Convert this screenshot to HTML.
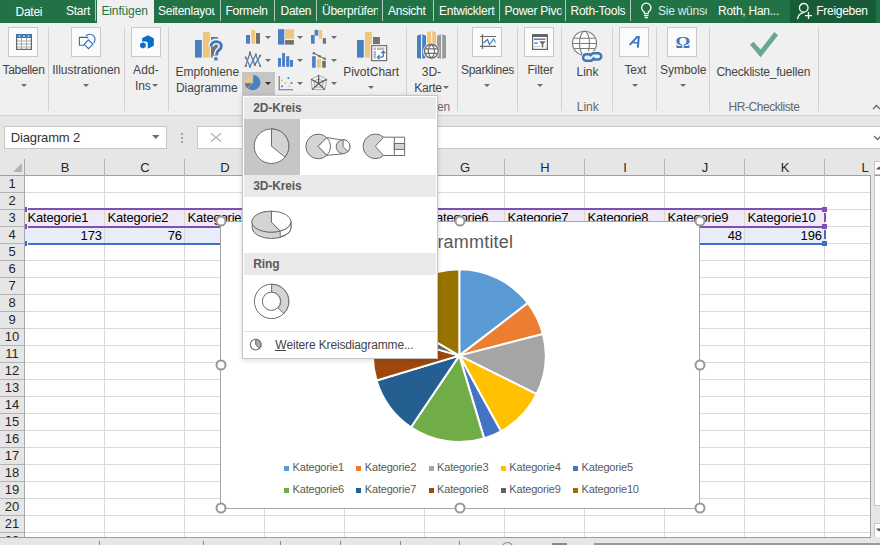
<!DOCTYPE html><html><head><meta charset="utf-8"><style>
*{margin:0;padding:0;box-sizing:border-box}
html,body{width:880px;height:545px;overflow:hidden;background:#e6e6e6;font-family:"Liberation Sans",sans-serif}
.t{position:absolute;white-space:nowrap;line-height:1}
svg{position:absolute;overflow:visible}
</style></head><body>
<div style="position:absolute;left:0px;top:0px;width:880px;height:23px;background:#217346"></div>
<div style="position:absolute;left:97px;top:0px;width:57px;height:23px;background:#f0f0f0"></div>
<div style="position:absolute;left:790px;top:0px;width:86px;height:23px;background:#185c37"></div>
<div style="position:absolute;left:95px;top:0px;width:1px;height:21px;background:#c9dbcf;opacity:0.85"></div>
<div style="position:absolute;left:220px;top:0px;width:1px;height:21px;background:#c9dbcf;opacity:0.85"></div>
<div style="position:absolute;left:274px;top:0px;width:1px;height:21px;background:#c9dbcf;opacity:0.85"></div>
<div style="position:absolute;left:316px;top:0px;width:1px;height:21px;background:#c9dbcf;opacity:0.85"></div>
<div style="position:absolute;left:382px;top:0px;width:1px;height:21px;background:#c9dbcf;opacity:0.85"></div>
<div style="position:absolute;left:433px;top:0px;width:1px;height:21px;background:#c9dbcf;opacity:0.85"></div>
<div style="position:absolute;left:499px;top:0px;width:1px;height:21px;background:#c9dbcf;opacity:0.85"></div>
<div style="position:absolute;left:565px;top:0px;width:1px;height:21px;background:#c9dbcf;opacity:0.85"></div>
<div style="position:absolute;left:630px;top:0px;width:1px;height:21px;background:#c9dbcf;opacity:0.85"></div>
<div class="t" style="left:15.5px;top:5.84px;font-size:12px;color:#ffffff;letter-spacing:-0.25px;">Datei</div>
<div class="t" style="left:66px;top:4.84px;font-size:12px;color:#ffffff;letter-spacing:-0.25px;">Start</div>
<div class="t" style="left:158px;top:4.84px;font-size:12px;color:#ffffff;letter-spacing:-0.25px;width:57px;clip-path:inset(-10px 0px -10px -10px);">Seitenlayout</div>
<div class="t" style="left:225.5px;top:4.84px;font-size:12px;color:#ffffff;letter-spacing:-0.25px;">Formeln</div>
<div class="t" style="left:280.5px;top:4.84px;font-size:12px;color:#ffffff;letter-spacing:-0.25px;">Daten</div>
<div class="t" style="left:322px;top:4.84px;font-size:12px;color:#ffffff;letter-spacing:-0.25px;width:56px;clip-path:inset(-10px 0px -10px -10px);">Überprüfen</div>
<div class="t" style="left:388px;top:4.84px;font-size:12px;color:#ffffff;letter-spacing:-0.25px;">Ansicht</div>
<div class="t" style="left:439px;top:4.84px;font-size:12px;color:#ffffff;letter-spacing:-0.25px;width:56px;clip-path:inset(-10px 0px -10px -10px);">Entwicklertools</div>
<div class="t" style="left:504.5px;top:4.84px;font-size:12px;color:#ffffff;letter-spacing:-0.25px;width:57px;clip-path:inset(-10px 0px -10px -10px);">Power Pivot</div>
<div class="t" style="left:570.5px;top:4.84px;font-size:12px;color:#ffffff;letter-spacing:-0.25px;">Roth-Tools</div>
<div class="t" style="left:101.5px;top:4.84px;font-size:12px;color:#217346;letter-spacing:-0.15px;">Einfügen</div>
<div class="t" style="left:658px;top:4.84px;font-size:12px;color:#dfe9e2;letter-spacing:-0.25px;width:49px;clip-path:inset(-10px 0px -10px -10px);">Sie wünschen</div>
<div class="t" style="left:718px;top:4.84px;font-size:12px;color:#ffffff;letter-spacing:-0.25px;">Roth, Han...</div>
<div class="t" style="left:816.3px;top:4.84px;font-size:12px;color:#ffffff;letter-spacing:-0.3px;">Freigeben</div>
<svg style="left:640px;top:1px" width="13" height="19" viewBox="0 0 13 19"><path d="M4.3 12.6V10.9A4.6 4.6 0 1 1 8.3 10.9V12.6z" fill="none" stroke="#fff" stroke-width="1.25" stroke-linejoin="round"/><path d="M4 14.6h4.6M4.7 16.6h3.2" stroke="#fff" stroke-width="1.25"/></svg>
<svg style="left:796px;top:2px" width="18" height="18" viewBox="0 0 18 18"><circle cx="7.75" cy="5.8" r="4.3" fill="none" stroke="#fff" stroke-width="1.3"/><path d="M1.6 16.6C2.4 13.2 4.6 11.1 7.6 10.7" fill="none" stroke="#fff" stroke-width="1.3" stroke-linecap="round"/><path d="M9 13.6h7M12.5 10.1v7" stroke="#fff" stroke-width="1.3"/></svg>
<div style="position:absolute;left:0px;top:23px;width:880px;height:92px;background:#f0f0f0"></div>
<div style="position:absolute;left:0px;top:115px;width:880px;height:1px;background:#d4d4d4"></div>
<div style="position:absolute;left:48px;top:27px;width:1px;height:84px;background:#d2d2d2"></div>
<div style="position:absolute;left:124px;top:27px;width:1px;height:84px;background:#d2d2d2"></div>
<div style="position:absolute;left:168px;top:27px;width:1px;height:84px;background:#d2d2d2"></div>
<div style="position:absolute;left:406px;top:27px;width:1px;height:84px;background:#d2d2d2"></div>
<div style="position:absolute;left:457px;top:27px;width:1px;height:84px;background:#d2d2d2"></div>
<div style="position:absolute;left:517px;top:27px;width:1px;height:84px;background:#d2d2d2"></div>
<div style="position:absolute;left:561px;top:27px;width:1px;height:84px;background:#d2d2d2"></div>
<div style="position:absolute;left:612px;top:27px;width:1px;height:84px;background:#d2d2d2"></div>
<div style="position:absolute;left:656px;top:27px;width:1px;height:84px;background:#d2d2d2"></div>
<div style="position:absolute;left:709px;top:27px;width:1px;height:84px;background:#d2d2d2"></div>
<div style="position:absolute;left:818px;top:27px;width:1px;height:84px;background:#d2d2d2"></div>
<div style="position:absolute;left:8px;top:27px;width:30px;height:30px;background:#fbfbfb;border:1px solid #c8c8c8"></div>
<svg style="left:16px;top:34px" width="16" height="16" viewBox="0 0 16 16"><rect x="0" y="0" width="16" height="16" fill="#fff"/><path d="M5.5 4v11M10.5 4v11M1 7h14M1 10h14M1 13h14" stroke="#a8a8a8" stroke-width="1"/><rect x="0.6" y="0.6" width="14.8" height="14.8" fill="none" stroke="#666" stroke-width="1.2"/><rect x="0" y="0" width="16" height="4" fill="#3b73b5"/><path d="M2.5 2h2M7 2h2M11.5 2h2" stroke="#fff" stroke-width="1"/></svg>
<div class="t" style="left:2.6px;top:63.84px;font-size:12px;color:#444444;letter-spacing:-0.35px;">Tabellen</div>
<svg style="left:20.5px;top:84.0px" width="6" height="3" viewBox="0 0 6 3"><path d="M0 0h6L3 3z" fill="#6d6d6d"/></svg>
<div style="position:absolute;left:71px;top:27px;width:30px;height:30px;background:#fbfbfb;border:1px solid #c8c8c8"></div>
<svg style="left:78px;top:33px" width="18" height="17" viewBox="0 0 18 17"><g fill="none" stroke="#2f6db5" stroke-width="1.1"><path d="M6.1 12.3H1.4V4.4H9.6V5.6"/><path d="M10.5 6.9L14.9 11.3 10.5 15.7 6.1 11.3z"/><path d="M7.85 2.85A5.3 5.3 0 1 1 15.54 10.15"/></g></svg>
<div class="t" style="left:52.2px;top:63.84px;font-size:12px;color:#444444;letter-spacing:0px;">Illustrationen</div>
<svg style="left:83px;top:84.1px" width="6" height="3" viewBox="0 0 6 3"><path d="M0 0h6L3 3z" fill="#6d6d6d"/></svg>
<div style="position:absolute;left:131px;top:27px;width:30px;height:30px;background:#fbfbfb;border:1px solid #c8c8c8"></div>
<svg style="left:139px;top:34px" width="16" height="16" viewBox="0 0 16 16"><path d="M8.8 1.2l6 3v7.6l-6 3V8.4l-1.5-.9H3.1V4.2z" fill="#0a6dc9"/><path d="M3.9 8.3l2.8 1.5v3.2L3.9 14.5 1.1 13V9.8z" fill="#0a6dc9"/></svg>
<div class="t" style="left:133px;top:64.14px;font-size:12px;color:#444444;letter-spacing:0.15px;">Add-</div>
<div class="t" style="left:135px;top:79.84px;font-size:12px;color:#444444;letter-spacing:-0.1px;">Ins</div>
<svg style="left:151.8px;top:84.0px" width="6" height="3" viewBox="0 0 6 3"><path d="M0 0h6L3 3z" fill="#6d6d6d"/></svg>
<svg style="left:195px;top:32px" width="24" height="26" viewBox="0 0 24 26"><rect x="0" y="8" width="6.8" height="17.6" fill="#4a7fc1"/><rect x="8" y="0" width="6.8" height="25.6" fill="#efc67c"/><rect x="16" y="5" width="6.9" height="20.6" fill="#737373"/></svg>
<svg style="left:207px;top:39px" width="18" height="23" viewBox="0 0 18 23"><path d="M4 7.6c0-3 2.2-5 5.2-5 3 0 5.2 1.8 5.2 4.5 0 2.2-1.2 3.2-2.7 4.3-1.3 1-1.8 1.6-1.8 3v1.3" fill="none" stroke="#f0f0f0" stroke-width="6"/><rect x="5.6" y="16.5" width="6" height="6" fill="#f0f0f0"/><path d="M4 7.6c0-3 2.2-5 5.2-5 3 0 5.2 1.8 5.2 4.5 0 2.2-1.2 3.2-2.7 4.3-1.3 1-1.8 1.6-1.8 3v1.3" fill="none" stroke="#3e78bb" stroke-width="2.9"/><rect x="7.3" y="18.3" width="3.2" height="3.2" fill="#3e78bb"/></svg>
<div class="t" style="left:175.5px;top:65.84px;font-size:12px;color:#444444;letter-spacing:-0.05px;">Empfohlene</div>
<div class="t" style="left:176px;top:81.54px;font-size:12px;color:#444444;letter-spacing:-0.05px;">Diagramme</div>
<div style="position:absolute;left:242px;top:72px;width:33px;height:24px;background:#c5c5c5"></div>
<svg style="left:245px;top:29px" width="16" height="16" viewBox="0 0 16 16"><rect x="1" y="6" width="4" height="8.7" fill="#4a7fc1"/><rect x="6.3" y="1" width="3.9" height="13.7" fill="#efc67c"/><rect x="11" y="4" width="4" height="10.7" fill="#6f6f6f"/></svg>
<svg style="left:277px;top:29px" width="17" height="16" viewBox="0 0 17 16"><rect x="1" y="0.2" width="6.3" height="15.4" fill="#4a7fc1"/><rect x="8.2" y="0.2" width="8.7" height="9.6" fill="#efc67c"/><rect x="8.2" y="11.1" width="8.7" height="4.5" fill="#6f6f6f"/></svg>
<svg style="left:310px;top:29px" width="17" height="16" viewBox="0 0 17 16"><rect x="1" y="6" width="3.7" height="8.7" fill="#4a7fc1"/><rect x="4.6" y="0.9" width="3.6" height="5.7" fill="#4a7fc1"/><rect x="8.9" y="0.9" width="3.3" height="8.9" fill="#efc67c"/><rect x="12.8" y="9.2" width="3.2" height="5.5" fill="#6f6f6f"/></svg>
<svg style="left:243px;top:49px" width="20" height="20" viewBox="0 0 20 20"><path d="M2.75 16.9L7 3.7 11.9 15.8 17.1 6.8" fill="none" stroke="#6f6f6f" stroke-width="1.2"/><path d="M2.75 8.6L7 17.6 12.8 5.7 17.1 16.9" fill="none" stroke="#4a7fc1" stroke-width="1.2"/><g fill="#6f6f6f"><rect x="1.75" y="15.9" width="2" height="2"/><rect x="6" y="2.7" width="2" height="2"/><rect x="10.9" y="14.8" width="2" height="2"/><rect x="16.1" y="5.8" width="2" height="2"/></g><g fill="#4a7fc1"><rect x="1.75" y="7.6" width="2" height="2"/><rect x="6" y="16.6" width="2" height="2"/><rect x="11.8" y="4.7" width="2" height="2"/><rect x="16.1" y="15.9" width="2" height="2"/></g></svg>
<svg style="left:277px;top:52px" width="17" height="16" viewBox="0 0 17 16"><rect x="1" y="6" width="3" height="8.8" fill="#4a7fc1"/><rect x="5.1" y="1" width="2.9" height="13.8" fill="#4a7fc1"/><rect x="9.2" y="4.2" width="3.1" height="10.6" fill="#4a7fc1"/><rect x="13" y="8" width="3" height="6.8" fill="#4a7fc1"/></svg>
<svg style="left:311px;top:52px" width="16" height="16" viewBox="0 0 16 16"><rect x="1.1" y="4.2" width="3.6" height="11.5" fill="#4a7fc1"/><rect x="6" y="7.1" width="3.9" height="8.6" fill="#efc67c"/><rect x="11.2" y="8.9" width="3.6" height="6.8" fill="#6f6f6f"/><path d="M2.8 1l5.8 3.2 5.1 2.5" fill="none" stroke="#6f6f6f" stroke-width="1.1"/><circle cx="2.8" cy="1.2" r="1.3" fill="#6f6f6f"/><circle cx="8.6" cy="4.2" r="1.3" fill="#6f6f6f"/><circle cx="13.7" cy="6.7" r="1.3" fill="#6f6f6f"/></svg>
<svg style="left:245px;top:75px" width="16" height="16" viewBox="0 0 16 16"><path d="M8.2 7.5V0A7.6 7.6 0 1 1 2.8 13.3z" fill="#4a7fc1"/><path d="M7.2 8.3L1.9 13.3A7.6 7.6 0 0 1 0 8.3z" fill="#6f6f6f"/><path d="M7.2 7.3H0A7.6 7.6 0 0 1 7.2 0z" fill="#efc67c"/></svg>
<svg style="left:278px;top:75px" width="16" height="16" viewBox="0 0 16 16"><path d="M1.2 1v13.8H15" fill="none" stroke="#6f6f6f" stroke-width="1.1"/><rect x="9.5" y="2.2" width="1.8" height="1.8" fill="#4a7fc1"/><rect x="3.2" y="4.5" width="1.8" height="1.8" fill="#efc67c"/><rect x="6.4" y="7.2" width="1.8" height="1.8" fill="#efc67c"/><rect x="12.6" y="7.2" width="1.8" height="1.8" fill="#4a7fc1"/><rect x="3.2" y="10.4" width="1.8" height="1.8" fill="#4a7fc1"/><rect x="10.6" y="10.4" width="1.8" height="1.8" fill="#efc67c"/></svg>
<svg style="left:308px;top:72px" width="22" height="22" viewBox="0 0 22 22"><g fill="none" stroke="#8a8a8a" stroke-width="0.7"><path d="M10.6 3.2L18.8 7.3 16.8 17.6H4.2L3.2 7.3z"/><path d="M10.6 7L15.5 9.3 14.2 15H7L5.9 9.3z"/></g><g stroke="#5a5a5a" stroke-width="1.3"><path d="M10.6 11.5V3.2M10.6 11.5L18.8 7.3M10.6 11.5L16.8 17.6M10.6 11.5L4.2 17.6M10.6 11.5L3.2 7.3"/></g></svg>
<svg style="left:264.5px;top:36.0px" width="6" height="3" viewBox="0 0 6 3"><path d="M0 0h6L3 3z" fill="#6d6d6d"/></svg>
<svg style="left:297px;top:36.0px" width="6" height="3" viewBox="0 0 6 3"><path d="M0 0h6L3 3z" fill="#6d6d6d"/></svg>
<svg style="left:330.5px;top:36.0px" width="6" height="3" viewBox="0 0 6 3"><path d="M0 0h6L3 3z" fill="#6d6d6d"/></svg>
<svg style="left:264.5px;top:59.0px" width="6" height="3" viewBox="0 0 6 3"><path d="M0 0h6L3 3z" fill="#6d6d6d"/></svg>
<svg style="left:297px;top:59.0px" width="6" height="3" viewBox="0 0 6 3"><path d="M0 0h6L3 3z" fill="#6d6d6d"/></svg>
<svg style="left:330.5px;top:59.0px" width="6" height="3" viewBox="0 0 6 3"><path d="M0 0h6L3 3z" fill="#6d6d6d"/></svg>
<svg style="left:297px;top:81.8px" width="6" height="3" viewBox="0 0 6 3"><path d="M0 0h6L3 3z" fill="#6d6d6d"/></svg>
<svg style="left:330.5px;top:81.8px" width="6" height="3" viewBox="0 0 6 3"><path d="M0 0h6L3 3z" fill="#6d6d6d"/></svg>
<svg style="left:264.5px;top:81.8px" width="6" height="3" viewBox="0 0 6 3"><path d="M0 0h6L3 3z" fill="#303030"/></svg>
<svg style="left:357px;top:32px" width="24" height="26" viewBox="0 0 24 26"><rect x="0" y="8" width="6.8" height="17.6" fill="#4a7fc1"/><rect x="8" y="0" width="6.8" height="25.6" fill="#efc67c"/><rect x="16" y="5" width="6.9" height="20.6" fill="#737373"/></svg>
<svg style="left:370px;top:44px" width="18" height="18" viewBox="0 0 18 18"><rect x="0" y="0" width="18" height="18" fill="#f0f0f0"/><rect x="1.6" y="1.6" width="15" height="15" fill="#fff" stroke="#777" stroke-width="1.3"/><rect x="3.5" y="3.5" width="2.5" height="2.5" fill="#b8b8b8"/><rect x="7" y="3.5" width="7.5" height="2.5" fill="#b8b8b8"/><rect x="3.5" y="7" width="2.5" height="7.5" fill="#b8b8b8"/><path d="M7.5 13.2h4.3a1.5 1.5 0 0 0 1.5-1.5V7.3" fill="none" stroke="#3e78bb" stroke-width="1.3"/><path d="M9.5 11.2l-2 2 2 2M11.3 9.2l2-2 2 2" fill="none" stroke="#3e78bb" stroke-width="1.3"/></svg>
<div class="t" style="left:343.2px;top:65.94px;font-size:12px;color:#444444;letter-spacing:-0.02px;">PivotChart</div>
<svg style="left:368px;top:85.9px" width="6" height="3" viewBox="0 0 6 3"><path d="M0 0h6L3 3z" fill="#6d6d6d"/></svg>
<svg style="left:417px;top:31px" width="30" height="29" viewBox="0 0 30 29"><path d="M0 4.8l4 -1.6v24.6L0 27z" fill="#4a7fc1"/><path d="M5.2 3.2l3.8 1.6V27l-3.8 0.8z" fill="#4a7fc1"/><path d="M10 1.6l4-1.6v24H10z" fill="#efc67c"/><path d="M15.2 0l3.8 1.6V24h-3.8z" fill="#efc67c"/><path d="M20 4.8l4-1.6v24.6l-4-.8z" fill="#9a9a9a"/><path d="M25.2 3.2l3.8 1.6V27l-3.8 .8z" fill="#9a9a9a"/><circle cx="14.3" cy="20.4" r="8.3" fill="#f0f0f0"/><circle cx="14.4" cy="20.1" r="6.9" fill="#fff" stroke="#6f6f6f" stroke-width="1.4"/><path d="M7.8 17.9h13.2M7.8 22.3h13.2" stroke="#6f6f6f" stroke-width="1.2"/><path d="M14.4 13.2c-4.2 3.5-4.2 10.3 0 13.8M14.4 13.2c4.2 3.5 4.2 10.3 0 13.8" fill="none" stroke="#6f6f6f" stroke-width="1.2"/></svg>
<div class="t" style="left:421.8px;top:65.94px;font-size:12px;color:#444444;letter-spacing:-0.05px;">3D-</div>
<div class="t" style="left:414.3px;top:81.54px;font-size:12px;color:#444444;letter-spacing:-0.25px;">Karte</div>
<svg style="left:443.3px;top:85.7px" width="6" height="3" viewBox="0 0 6 3"><path d="M0 0h6L3 3z" fill="#6d6d6d"/></svg>
<div class="t" style="left:414px;top:100.84px;font-size:12px;color:#666;letter-spacing:-0.1px;">Touren</div>
<div class="t" style="left:261px;top:100.84px;font-size:12px;color:#666;letter-spacing:-0.1px;">Diagramme</div>
<div style="position:absolute;left:472px;top:27px;width:30px;height:30px;background:#fbfbfb;border:1px solid #c8c8c8"></div>
<svg style="left:479px;top:33px" width="18" height="17" viewBox="0 0 18 17"><path d="M3.5 1v15M1 3.5h16M1 13.4h16" stroke="#6a6a6a" stroke-width="1.2"/><path d="M4.5 10l4-3.5 2 5 4-5.5 2 3.5" fill="none" stroke="#3e78bb" stroke-width="1.1"/></svg>
<div class="t" style="left:461px;top:63.84px;font-size:12px;color:#444444;letter-spacing:-0.3px;">Sparklines</div>
<svg style="left:484.2px;top:84.1px" width="6" height="3" viewBox="0 0 6 3"><path d="M0 0h6L3 3z" fill="#6d6d6d"/></svg>
<div style="position:absolute;left:524px;top:27px;width:30px;height:30px;background:#fbfbfb;border:1px solid #c8c8c8"></div>
<svg style="left:532px;top:34px" width="16" height="16" viewBox="0 0 16 16"><rect x="0.6" y="0.6" width="14.8" height="14.8" fill="#fff" stroke="#666" stroke-width="1.2"/><rect x="0" y="0" width="16" height="3" fill="#666"/><rect x="2" y="4.5" width="11.5" height="1.4" fill="#3e78bb"/><rect x="2" y="8.5" width="4" height="1.2" fill="#3e78bb"/><rect x="2" y="12" width="6" height="1.1" fill="#b7cde6"/><path d="M7.2 7.2h6.6l-2.5 2.8v3.5h-1.6V10z" fill="#6a6a6a"/><rect x="13.2" y="12" width="0.8" height="1.5" fill="#9cb8dc"/></svg>
<div class="t" style="left:527.4px;top:63.84px;font-size:12px;color:#444444;letter-spacing:-0.1px;">Filter</div>
<svg style="left:536.6px;top:84.1px" width="6" height="3" viewBox="0 0 6 3"><path d="M0 0h6L3 3z" fill="#6d6d6d"/></svg>
<svg style="left:571px;top:30px" width="34" height="32" viewBox="0 0 34 32"><g fill="#fff" stroke="#7a7a7a" stroke-width="1.1"><circle cx="13.5" cy="13.2" r="12"/></g><g fill="none" stroke="#7a7a7a" stroke-width="1.1"><ellipse cx="13.5" cy="13.2" rx="5" ry="12"/><path d="M1.5 13.5h24M3.2 8.2h20.6M3.2 18.5h20.6"/></g><path d="M11 32V25.5A4.5 4.5 0 0 1 15.5 21H33V32z" fill="#f0f0f0"/><g fill="none" stroke="#3e78bb" stroke-width="2.5"><path d="M19.5 24.3h-4.2a3.2 3.2 0 0 0 0 6.4h5.2l3-3"/><path d="M22.5 29.6h4.5a3.2 3.2 0 0 0 0-6.4h-5.2l-3 3"/></g></svg>
<div class="t" style="left:576.6px;top:65.54px;font-size:12px;color:#444444;letter-spacing:-0.05px;">Link</div>
<div class="t" style="left:576.8px;top:100.84px;font-size:12px;color:#666;letter-spacing:-0.05px;">Link</div>
<div style="position:absolute;left:619px;top:27px;width:30px;height:30px;background:#fbfbfb;border:1px solid #c8c8c8"></div>
<svg style="left:626px;top:33px" width="18" height="18" viewBox="0 0 18 18"><g fill="none" stroke="#3e78bb" stroke-linecap="round" stroke-linejoin="round"><path d="M4.3 11.2L11.1 4.1" stroke-width="2"/><path d="M12.8 3.9L11.9 13.9" stroke-width="2"/><path d="M11 3.8H12.9" stroke-width="1.8"/><path d="M7.3 9.6L11.9 9.9" stroke-width="1.5"/></g></svg>
<div class="t" style="left:624.4px;top:63.84px;font-size:12px;color:#444444;letter-spacing:-0.05px;">Text</div>
<svg style="left:631.5px;top:84.1px" width="6" height="3" viewBox="0 0 6 3"><path d="M0 0h6L3 3z" fill="#6d6d6d"/></svg>
<div style="position:absolute;left:667px;top:27px;width:30px;height:30px;background:#fbfbfb;border:1px solid #c8c8c8"></div>
<div class="t" style="left:676px;top:34px;font-family:'Liberation Serif',serif;font-size:17px;font-weight:bold;color:#3e78bb;transform:scaleX(1.08)">&#937;</div>
<div class="t" style="left:660.1px;top:63.84px;font-size:12px;color:#444444;letter-spacing:-0.05px;">Symbole</div>
<svg style="left:679.5px;top:84.1px" width="6" height="3" viewBox="0 0 6 3"><path d="M0 0h6L3 3z" fill="#6d6d6d"/></svg>
<svg style="left:749px;top:31px" width="30" height="27" viewBox="0 0 30 27"><path d="M1 13.8l3.4-3 7.2 7.7L25.3 0.9l3.8 3.3L11.6 26.3z" fill="#6ba892"/></svg>
<div class="t" style="left:716.4px;top:66.04px;font-size:12px;color:#444444;letter-spacing:-0.2px;">Checkliste_fuellen</div>
<div class="t" style="left:728.6px;top:100.84px;font-size:12px;color:#666;letter-spacing:-0.45px;">HR-Checkliste</div>
<svg style="left:872px;top:104px" width="9" height="6" viewBox="0 0 9 6"><path d="M1 5l3.5-3.5L8 5" fill="none" stroke="#666" stroke-width="1.3"/></svg>
<div style="position:absolute;left:0px;top:116px;width:880px;height:43px;background:#e6e6e6"></div>
<div style="position:absolute;left:4px;top:126px;width:163px;height:23px;background:#fff;border:1px solid #c6c6c6"></div>
<div class="t" style="left:10.8px;top:131.20px;font-size:13px;color:#333;letter-spacing:-0.15px;">Diagramm 2</div>
<svg style="left:152px;top:135px" width="8" height="4" viewBox="0 0 8 4"><path d="M0 0h7.5L3.75 4z" fill="#6d6d6d"/></svg>
<div style="position:absolute;left:181px;top:132.5px;width:2px;height:2px;background:#a6a6a6"></div>
<div style="position:absolute;left:181px;top:136.5px;width:2px;height:2px;background:#a6a6a6"></div>
<div style="position:absolute;left:181px;top:140.5px;width:2px;height:2px;background:#a6a6a6"></div>
<div style="position:absolute;left:197px;top:126px;width:690px;height:23px;background:#fff;border:1px solid #c6c6c6"></div>
<svg style="left:210px;top:133px" width="12" height="9" viewBox="0 0 12 9"><path d="M1 0.5l10 8M11 0.5l-10 8" stroke="#b0b0b0" stroke-width="1.2"/></svg>
<svg style="left:873px;top:135px" width="9" height="6" viewBox="0 0 9 6"><path d="M1 1l3.5 3.5L8 1" fill="none" stroke="#666" stroke-width="1.3"/></svg>
<div style="position:absolute;left:0px;top:159px;width:874px;height:16px;background:#e6e6e6"></div>
<div style="position:absolute;left:0px;top:175px;width:871px;height:1px;background:#9f9f9f"></div>
<svg style="left:12.5px;top:163px" width="9" height="9" viewBox="0 0 9 9"><path d="M9 0V9H0z" fill="#b3b3b3"/></svg>
<div style="position:absolute;left:24px;top:159px;width:1px;height:17px;background:#a8a8a8"></div>
<div style="position:absolute;left:104px;top:159px;width:1px;height:17px;background:#b5b5b5"></div>
<div class="t" style="left:-135px;width:400px;text-align:center;top:161.20px;font-size:13px;color:#262626;">B</div>
<div style="position:absolute;left:184px;top:159px;width:1px;height:17px;background:#b5b5b5"></div>
<div class="t" style="left:-55px;width:400px;text-align:center;top:161.20px;font-size:13px;color:#262626;">C</div>
<div style="position:absolute;left:264px;top:159px;width:1px;height:17px;background:#b5b5b5"></div>
<div class="t" style="left:25px;width:400px;text-align:center;top:161.20px;font-size:13px;color:#262626;">D</div>
<div style="position:absolute;left:344px;top:159px;width:1px;height:17px;background:#b5b5b5"></div>
<div class="t" style="left:105px;width:400px;text-align:center;top:161.20px;font-size:13px;color:#262626;">E</div>
<div style="position:absolute;left:424px;top:159px;width:1px;height:17px;background:#b5b5b5"></div>
<div class="t" style="left:185px;width:400px;text-align:center;top:161.20px;font-size:13px;color:#262626;">F</div>
<div style="position:absolute;left:504px;top:159px;width:1px;height:17px;background:#b5b5b5"></div>
<div class="t" style="left:265px;width:400px;text-align:center;top:161.20px;font-size:13px;color:#262626;">G</div>
<div style="position:absolute;left:584px;top:159px;width:1px;height:17px;background:#b5b5b5"></div>
<div class="t" style="left:345px;width:400px;text-align:center;top:161.20px;font-size:13px;color:#262626;">H</div>
<div style="position:absolute;left:664px;top:159px;width:1px;height:17px;background:#b5b5b5"></div>
<div class="t" style="left:425px;width:400px;text-align:center;top:161.20px;font-size:13px;color:#262626;">I</div>
<div style="position:absolute;left:744px;top:159px;width:1px;height:17px;background:#b5b5b5"></div>
<div class="t" style="left:505px;width:400px;text-align:center;top:161.20px;font-size:13px;color:#262626;">J</div>
<div style="position:absolute;left:824px;top:159px;width:1px;height:17px;background:#b5b5b5"></div>
<div class="t" style="left:585px;width:400px;text-align:center;top:161.20px;font-size:13px;color:#262626;">K</div>
<div class="t" style="left:665px;width:400px;text-align:center;top:161.20px;font-size:13px;color:#262626;">L</div>
<div style="position:absolute;left:25px;top:176px;width:845px;height:361px;background:#fff"></div>
<div style="position:absolute;left:0px;top:176px;width:24px;height:361px;background:#e6e6e6"></div>
<div style="position:absolute;left:24px;top:176px;width:1px;height:361px;background:#a8a8a8"></div>
<div style="position:absolute;left:0px;top:192px;width:24px;height:1px;background:#b4b4b4"></div>
<div style="position:absolute;left:25px;top:192px;width:845px;height:1px;background:#dadada"></div>
<div class="t" style="left:-188px;width:400px;text-align:center;top:177.00px;font-size:13px;color:#262626;height:17px;overflow:hidden;">1</div>
<div style="position:absolute;left:0px;top:209px;width:24px;height:1px;background:#b4b4b4"></div>
<div style="position:absolute;left:25px;top:209px;width:845px;height:1px;background:#dadada"></div>
<div class="t" style="left:-188px;width:400px;text-align:center;top:194.00px;font-size:13px;color:#262626;height:17px;overflow:hidden;">2</div>
<div style="position:absolute;left:0px;top:226px;width:24px;height:1px;background:#b4b4b4"></div>
<div style="position:absolute;left:25px;top:226px;width:845px;height:1px;background:#dadada"></div>
<div class="t" style="left:-188px;width:400px;text-align:center;top:211.00px;font-size:13px;color:#262626;height:17px;overflow:hidden;">3</div>
<div style="position:absolute;left:0px;top:243px;width:24px;height:1px;background:#b4b4b4"></div>
<div style="position:absolute;left:25px;top:243px;width:845px;height:1px;background:#dadada"></div>
<div class="t" style="left:-188px;width:400px;text-align:center;top:228.00px;font-size:13px;color:#262626;height:17px;overflow:hidden;">4</div>
<div style="position:absolute;left:0px;top:260px;width:24px;height:1px;background:#b4b4b4"></div>
<div style="position:absolute;left:25px;top:260px;width:845px;height:1px;background:#dadada"></div>
<div class="t" style="left:-188px;width:400px;text-align:center;top:245.00px;font-size:13px;color:#262626;height:17px;overflow:hidden;">5</div>
<div style="position:absolute;left:0px;top:277px;width:24px;height:1px;background:#b4b4b4"></div>
<div style="position:absolute;left:25px;top:277px;width:845px;height:1px;background:#dadada"></div>
<div class="t" style="left:-188px;width:400px;text-align:center;top:262.00px;font-size:13px;color:#262626;height:17px;overflow:hidden;">6</div>
<div style="position:absolute;left:0px;top:294px;width:24px;height:1px;background:#b4b4b4"></div>
<div style="position:absolute;left:25px;top:294px;width:845px;height:1px;background:#dadada"></div>
<div class="t" style="left:-188px;width:400px;text-align:center;top:279.00px;font-size:13px;color:#262626;height:17px;overflow:hidden;">7</div>
<div style="position:absolute;left:0px;top:311px;width:24px;height:1px;background:#b4b4b4"></div>
<div style="position:absolute;left:25px;top:311px;width:845px;height:1px;background:#dadada"></div>
<div class="t" style="left:-188px;width:400px;text-align:center;top:296.00px;font-size:13px;color:#262626;height:17px;overflow:hidden;">8</div>
<div style="position:absolute;left:0px;top:328px;width:24px;height:1px;background:#b4b4b4"></div>
<div style="position:absolute;left:25px;top:328px;width:845px;height:1px;background:#dadada"></div>
<div class="t" style="left:-188px;width:400px;text-align:center;top:313.00px;font-size:13px;color:#262626;height:17px;overflow:hidden;">9</div>
<div style="position:absolute;left:0px;top:345px;width:24px;height:1px;background:#b4b4b4"></div>
<div style="position:absolute;left:25px;top:345px;width:845px;height:1px;background:#dadada"></div>
<div class="t" style="left:-188px;width:400px;text-align:center;top:330.00px;font-size:13px;color:#262626;height:17px;overflow:hidden;">10</div>
<div style="position:absolute;left:0px;top:362px;width:24px;height:1px;background:#b4b4b4"></div>
<div style="position:absolute;left:25px;top:362px;width:845px;height:1px;background:#dadada"></div>
<div class="t" style="left:-188px;width:400px;text-align:center;top:347.00px;font-size:13px;color:#262626;height:17px;overflow:hidden;">11</div>
<div style="position:absolute;left:0px;top:379px;width:24px;height:1px;background:#b4b4b4"></div>
<div style="position:absolute;left:25px;top:379px;width:845px;height:1px;background:#dadada"></div>
<div class="t" style="left:-188px;width:400px;text-align:center;top:364.00px;font-size:13px;color:#262626;height:17px;overflow:hidden;">12</div>
<div style="position:absolute;left:0px;top:396px;width:24px;height:1px;background:#b4b4b4"></div>
<div style="position:absolute;left:25px;top:396px;width:845px;height:1px;background:#dadada"></div>
<div class="t" style="left:-188px;width:400px;text-align:center;top:381.00px;font-size:13px;color:#262626;height:17px;overflow:hidden;">13</div>
<div style="position:absolute;left:0px;top:413px;width:24px;height:1px;background:#b4b4b4"></div>
<div style="position:absolute;left:25px;top:413px;width:845px;height:1px;background:#dadada"></div>
<div class="t" style="left:-188px;width:400px;text-align:center;top:398.00px;font-size:13px;color:#262626;height:17px;overflow:hidden;">14</div>
<div style="position:absolute;left:0px;top:430px;width:24px;height:1px;background:#b4b4b4"></div>
<div style="position:absolute;left:25px;top:430px;width:845px;height:1px;background:#dadada"></div>
<div class="t" style="left:-188px;width:400px;text-align:center;top:415.00px;font-size:13px;color:#262626;height:17px;overflow:hidden;">15</div>
<div style="position:absolute;left:0px;top:447px;width:24px;height:1px;background:#b4b4b4"></div>
<div style="position:absolute;left:25px;top:447px;width:845px;height:1px;background:#dadada"></div>
<div class="t" style="left:-188px;width:400px;text-align:center;top:432.00px;font-size:13px;color:#262626;height:17px;overflow:hidden;">16</div>
<div style="position:absolute;left:0px;top:464px;width:24px;height:1px;background:#b4b4b4"></div>
<div style="position:absolute;left:25px;top:464px;width:845px;height:1px;background:#dadada"></div>
<div class="t" style="left:-188px;width:400px;text-align:center;top:449.00px;font-size:13px;color:#262626;height:17px;overflow:hidden;">17</div>
<div style="position:absolute;left:0px;top:481px;width:24px;height:1px;background:#b4b4b4"></div>
<div style="position:absolute;left:25px;top:481px;width:845px;height:1px;background:#dadada"></div>
<div class="t" style="left:-188px;width:400px;text-align:center;top:466.00px;font-size:13px;color:#262626;height:17px;overflow:hidden;">18</div>
<div style="position:absolute;left:0px;top:498px;width:24px;height:1px;background:#b4b4b4"></div>
<div style="position:absolute;left:25px;top:498px;width:845px;height:1px;background:#dadada"></div>
<div class="t" style="left:-188px;width:400px;text-align:center;top:483.00px;font-size:13px;color:#262626;height:17px;overflow:hidden;">19</div>
<div style="position:absolute;left:0px;top:515px;width:24px;height:1px;background:#b4b4b4"></div>
<div style="position:absolute;left:25px;top:515px;width:845px;height:1px;background:#dadada"></div>
<div class="t" style="left:-188px;width:400px;text-align:center;top:500.00px;font-size:13px;color:#262626;height:17px;overflow:hidden;">20</div>
<div style="position:absolute;left:0px;top:532px;width:24px;height:1px;background:#b4b4b4"></div>
<div style="position:absolute;left:25px;top:532px;width:845px;height:1px;background:#dadada"></div>
<div class="t" style="left:-188px;width:400px;text-align:center;top:517.00px;font-size:13px;color:#262626;height:17px;overflow:hidden;">21</div>
<div style="position:absolute;left:0px;top:549px;width:24px;height:1px;background:#b4b4b4"></div>
<div style="position:absolute;left:25px;top:549px;width:845px;height:1px;background:#dadada"></div>
<div class="t" style="left:-188px;width:400px;text-align:center;top:534.00px;font-size:13px;color:#262626;height:5px;overflow:hidden;">22</div>
<div style="position:absolute;left:104px;top:176px;width:1px;height:361px;background:#dadada"></div>
<div style="position:absolute;left:184px;top:176px;width:1px;height:361px;background:#dadada"></div>
<div style="position:absolute;left:264px;top:176px;width:1px;height:361px;background:#dadada"></div>
<div style="position:absolute;left:344px;top:176px;width:1px;height:361px;background:#dadada"></div>
<div style="position:absolute;left:424px;top:176px;width:1px;height:361px;background:#dadada"></div>
<div style="position:absolute;left:504px;top:176px;width:1px;height:361px;background:#dadada"></div>
<div style="position:absolute;left:584px;top:176px;width:1px;height:361px;background:#dadada"></div>
<div style="position:absolute;left:664px;top:176px;width:1px;height:361px;background:#dadada"></div>
<div style="position:absolute;left:744px;top:176px;width:1px;height:361px;background:#dadada"></div>
<div style="position:absolute;left:824px;top:176px;width:1px;height:361px;background:#dadada"></div>
<div style="position:absolute;left:870px;top:176px;width:1px;height:361px;background:#a0a0a0"></div>
<div style="position:absolute;left:871px;top:159px;width:3px;height:379px;background:#e6e6e6"></div>
<div style="position:absolute;left:874px;top:161px;width:6px;height:377px;background:#e6e6e6"></div>
<div style="position:absolute;left:874px;top:161px;width:7px;height:14px;background:#fff;border:1px solid #c6c6c6"></div>
<div style="position:absolute;left:874px;top:175px;width:7px;height:331px;background:#fff;border:1px solid #c6c6c6;border-top:1px solid #9a9a9a"></div>
<div style="position:absolute;left:874px;top:523px;width:7px;height:15px;background:#fff;border:1px solid #c6c6c6"></div>
<svg style="left:876px;top:166px" width="5" height="4" viewBox="0 0 5 4"><path d="M0 3.5L3 0.5 6 3.5z" fill="#555"/></svg>
<svg style="left:876px;top:528px" width="5" height="4" viewBox="0 0 5 4"><path d="M0 0.5L3 3.5 6 0.5z" fill="#555"/></svg>
<div style="position:absolute;left:25px;top:210px;width:799px;height:16px;background:#efeaf5"></div>
<div style="position:absolute;left:25px;top:228px;width:799px;height:15px;background:#e7eef9"></div>
<div style="position:absolute;left:104px;top:210px;width:1px;height:33px;background:#d6d6d6"></div>
<div style="position:absolute;left:184px;top:210px;width:1px;height:33px;background:#d6d6d6"></div>
<div style="position:absolute;left:264px;top:210px;width:1px;height:33px;background:#d6d6d6"></div>
<div style="position:absolute;left:344px;top:210px;width:1px;height:33px;background:#d6d6d6"></div>
<div style="position:absolute;left:424px;top:210px;width:1px;height:33px;background:#d6d6d6"></div>
<div style="position:absolute;left:504px;top:210px;width:1px;height:33px;background:#d6d6d6"></div>
<div style="position:absolute;left:584px;top:210px;width:1px;height:33px;background:#d6d6d6"></div>
<div style="position:absolute;left:664px;top:210px;width:1px;height:33px;background:#d6d6d6"></div>
<div style="position:absolute;left:744px;top:210px;width:1px;height:33px;background:#d6d6d6"></div>
<div style="position:absolute;left:824px;top:210px;width:1px;height:33px;background:#d6d6d6"></div>
<div class="t" style="left:27.5px;top:211.20px;font-size:13px;color:#000;letter-spacing:-0.2px;height:13.4px;overflow:hidden;width:77px">Kategorie1</div>
<div class="t" style="left:107.5px;top:211.20px;font-size:13px;color:#000;letter-spacing:-0.2px;height:13.4px;overflow:hidden;width:77px">Kategorie2</div>
<div class="t" style="left:187.5px;top:211.20px;font-size:13px;color:#000;letter-spacing:-0.2px;height:13.4px;overflow:hidden;width:77px">Kategorie3</div>
<div class="t" style="left:267.5px;top:211.20px;font-size:13px;color:#000;letter-spacing:-0.2px;height:13.4px;overflow:hidden;width:77px">Kategorie4</div>
<div class="t" style="left:347.5px;top:211.20px;font-size:13px;color:#000;letter-spacing:-0.2px;height:13.4px;overflow:hidden;width:77px">Kategorie5</div>
<div class="t" style="left:427.5px;top:211.20px;font-size:13px;color:#000;letter-spacing:-0.2px;height:13.4px;overflow:hidden;width:77px">Kategorie6</div>
<div class="t" style="left:507.5px;top:211.20px;font-size:13px;color:#000;letter-spacing:-0.2px;height:13.4px;overflow:hidden;width:77px">Kategorie7</div>
<div class="t" style="left:587.5px;top:211.20px;font-size:13px;color:#000;letter-spacing:-0.2px;height:13.4px;overflow:hidden;width:77px">Kategorie8</div>
<div class="t" style="left:667.5px;top:211.20px;font-size:13px;color:#000;letter-spacing:-0.2px;height:13.4px;overflow:hidden;width:77px">Kategorie9</div>
<div class="t" style="left:747.5px;top:211.20px;font-size:13px;color:#000;letter-spacing:-0.2px;height:13.4px;overflow:hidden;width:77px">Kategorie10</div>
<div class="t" style="left:-298px;width:400px;text-align:right;top:229.00px;font-size:13px;color:#000;letter-spacing:-0.1px;">173</div>
<div class="t" style="left:-218px;width:400px;text-align:right;top:229.00px;font-size:13px;color:#000;letter-spacing:-0.1px;">76</div>
<div class="t" style="left:342px;width:400px;text-align:right;top:229.00px;font-size:13px;color:#000;letter-spacing:-0.1px;">48</div>
<div class="t" style="left:422px;width:400px;text-align:right;top:229.00px;font-size:13px;color:#000;letter-spacing:-0.1px;">196</div>
<div style="position:absolute;left:28px;top:208px;width:794px;height:2px;background:#7f4fb5"></div>
<div style="position:absolute;left:28px;top:226px;width:794px;height:2px;background:#7f4fb5"></div>
<div style="position:absolute;left:28px;top:243px;width:794px;height:2px;background:#3f6fc7"></div>
<div style="position:absolute;left:824px;top:213px;width:2px;height:9px;background:#7f4fb5"></div>
<div style="position:absolute;left:824px;top:230px;width:2px;height:9px;background:#3f6fc7"></div>
<div style="position:absolute;left:822px;top:207px;width:5px;height:5px;background:#7f4fb5"></div>
<div style="position:absolute;left:25px;top:207px;width:2px;height:5px;background:#7f4fb5"></div>
<div style="position:absolute;left:822px;top:224px;width:5px;height:5px;background:#7f4fb5"></div>
<div style="position:absolute;left:25px;top:224px;width:2px;height:5px;background:#7f4fb5"></div>
<div style="position:absolute;left:822px;top:241px;width:5px;height:5px;background:#3f6fc7"></div>
<div style="position:absolute;left:25px;top:241px;width:2px;height:5px;background:#3f6fc7"></div>
<div style="position:absolute;left:0px;top:537px;width:880px;height:8px;background:#e6e6e6"></div>
<div style="position:absolute;left:0px;top:537px;width:871px;height:1px;background:#9b9b9b"></div>
<div style="position:absolute;left:99px;top:541px;width:1px;height:4px;background:#8a8a8a"></div>
<div style="position:absolute;left:203px;top:541px;width:1px;height:4px;background:#8a8a8a"></div>
<div style="position:absolute;left:280px;top:541px;width:1px;height:4px;background:#8a8a8a"></div>
<div style="position:absolute;left:340px;top:541px;width:1px;height:4px;background:#8a8a8a"></div>
<div style="position:absolute;left:400px;top:541px;width:1px;height:4px;background:#8a8a8a"></div>
<div style="position:absolute;left:459px;top:541px;width:1px;height:4px;background:#8a8a8a"></div>
<svg style="left:500px;top:541px" width="16" height="8" viewBox="0 0 16 8"><circle cx="7.5" cy="7" r="5.5" fill="none" stroke="#8a8a8a" stroke-width="1.2"/></svg>
<div style="position:absolute;left:552px;top:543px;width:15px;height:2px;background:#8a8a8a"></div>
<div style="position:absolute;left:594px;top:543px;width:286px;height:2px;background:#9a9a9a"></div>
<div style="position:absolute;left:220px;top:221px;width:480px;height:288px;background:#fff;border:1px solid #a6a6a6"></div>
<div class="t" style="left:113.20000000000005px;width:400px;text-align:right;top:233.36px;font-size:18px;color:#595959;letter-spacing:0.2px;">Diagrammtitel</div>
<svg style="left:200px;top:200px" width="400" height="300" viewBox="0 0 400 300"><path d="M259.30 155.60L259.30 69.20A86.4 86.4 0 0 1 327.86 103.02z" fill="#5b9bd5" stroke="#fff" stroke-width="2" stroke-linejoin="round"/><path d="M259.30 155.60L327.86 103.02A86.4 86.4 0 0 1 342.98 134.09z" fill="#ed7d31" stroke="#fff" stroke-width="2" stroke-linejoin="round"/><path d="M259.30 155.60L342.98 134.09A86.4 86.4 0 0 1 336.58 194.23z" fill="#a5a5a5" stroke="#fff" stroke-width="2" stroke-linejoin="round"/><path d="M259.30 155.60L336.58 194.23A86.4 86.4 0 0 1 300.97 231.29z" fill="#ffc000" stroke="#fff" stroke-width="2" stroke-linejoin="round"/><path d="M259.30 155.60L300.97 231.29A86.4 86.4 0 0 1 284.12 238.36z" fill="#4472c4" stroke="#fff" stroke-width="2" stroke-linejoin="round"/><path d="M259.30 155.60L284.12 238.36A86.4 86.4 0 0 1 210.99 227.23z" fill="#70ad47" stroke="#fff" stroke-width="2" stroke-linejoin="round"/><path d="M259.30 155.60L210.99 227.23A86.4 86.4 0 0 1 176.54 180.42z" fill="#255e91" stroke="#fff" stroke-width="2" stroke-linejoin="round"/><path d="M259.30 155.60L176.54 180.42A86.4 86.4 0 0 1 176.22 131.88z" fill="#9e480e" stroke="#fff" stroke-width="2" stroke-linejoin="round"/><path d="M259.30 155.60L176.22 131.88A86.4 86.4 0 0 1 184.86 111.74z" fill="#636363" stroke="#fff" stroke-width="2" stroke-linejoin="round"/><path d="M259.30 155.60L184.86 111.74A86.4 86.4 0 0 1 259.30 69.20z" fill="#997300" stroke="#fff" stroke-width="2" stroke-linejoin="round"/></svg>
<div style="position:absolute;left:284.0px;top:466.2px;width:5px;height:5px;background:#5b9bd5"></div>
<div class="t" style="left:292.6px;top:462.09px;font-size:11px;color:#595959;letter-spacing:-0.2px;">Kategorie1</div>
<div style="position:absolute;left:356.25px;top:466.2px;width:5px;height:5px;background:#ed7d31"></div>
<div class="t" style="left:364.85px;top:462.09px;font-size:11px;color:#595959;letter-spacing:-0.2px;">Kategorie2</div>
<div style="position:absolute;left:428.5px;top:466.2px;width:5px;height:5px;background:#a5a5a5"></div>
<div class="t" style="left:437.1px;top:462.09px;font-size:11px;color:#595959;letter-spacing:-0.2px;">Kategorie3</div>
<div style="position:absolute;left:500.75px;top:466.2px;width:5px;height:5px;background:#ffc000"></div>
<div class="t" style="left:509.35px;top:462.09px;font-size:11px;color:#595959;letter-spacing:-0.2px;">Kategorie4</div>
<div style="position:absolute;left:573.0px;top:466.2px;width:5px;height:5px;background:#4472c4"></div>
<div class="t" style="left:581.6px;top:462.09px;font-size:11px;color:#595959;letter-spacing:-0.2px;">Kategorie5</div>
<div style="position:absolute;left:284.0px;top:488.3px;width:5px;height:5px;background:#70ad47"></div>
<div class="t" style="left:292.6px;top:484.19px;font-size:11px;color:#595959;letter-spacing:-0.2px;">Kategorie6</div>
<div style="position:absolute;left:356.25px;top:488.3px;width:5px;height:5px;background:#255e91"></div>
<div class="t" style="left:364.85px;top:484.19px;font-size:11px;color:#595959;letter-spacing:-0.2px;">Kategorie7</div>
<div style="position:absolute;left:428.5px;top:488.3px;width:5px;height:5px;background:#9e480e"></div>
<div class="t" style="left:437.1px;top:484.19px;font-size:11px;color:#595959;letter-spacing:-0.2px;">Kategorie8</div>
<div style="position:absolute;left:500.75px;top:488.3px;width:5px;height:5px;background:#636363"></div>
<div class="t" style="left:509.35px;top:484.19px;font-size:11px;color:#595959;letter-spacing:-0.2px;">Kategorie9</div>
<div style="position:absolute;left:573.0px;top:488.3px;width:5px;height:5px;background:#997300"></div>
<div class="t" style="left:581.6px;top:484.19px;font-size:11px;color:#595959;letter-spacing:-0.2px;">Kategorie10</div>
<svg style="left:214.5px;top:215px" width="12" height="12" viewBox="0 0 12 12"><circle cx="6" cy="6" r="4.5" fill="#fff" stroke="#989898" stroke-width="2"/></svg>
<svg style="left:214.5px;top:358.5px" width="12" height="12" viewBox="0 0 12 12"><circle cx="6" cy="6" r="4.5" fill="#fff" stroke="#989898" stroke-width="2"/></svg>
<svg style="left:214.5px;top:502px" width="12" height="12" viewBox="0 0 12 12"><circle cx="6" cy="6" r="4.5" fill="#fff" stroke="#989898" stroke-width="2"/></svg>
<svg style="left:453.5px;top:215px" width="12" height="12" viewBox="0 0 12 12"><circle cx="6" cy="6" r="4.5" fill="#fff" stroke="#989898" stroke-width="2"/></svg>
<svg style="left:453.5px;top:502px" width="12" height="12" viewBox="0 0 12 12"><circle cx="6" cy="6" r="4.5" fill="#fff" stroke="#989898" stroke-width="2"/></svg>
<svg style="left:693.5px;top:215px" width="12" height="12" viewBox="0 0 12 12"><circle cx="6" cy="6" r="4.5" fill="#fff" stroke="#989898" stroke-width="2"/></svg>
<svg style="left:693.5px;top:358.5px" width="12" height="12" viewBox="0 0 12 12"><circle cx="6" cy="6" r="4.5" fill="#fff" stroke="#989898" stroke-width="2"/></svg>
<svg style="left:693.5px;top:502px" width="12" height="12" viewBox="0 0 12 12"><circle cx="6" cy="6" r="4.5" fill="#fff" stroke="#989898" stroke-width="2"/></svg>
<div style="position:absolute;left:242px;top:95px;width:196px;height:264px;background:#fff;border:1px solid #c6c6c6;box-shadow:0 1px 5px rgba(0,0,0,0.16)"></div>
<div style="position:absolute;left:244px;top:97px;width:192px;height:22px;background:#e9e9e9"></div>
<div class="t" style="left:253.3px;top:101.54px;font-size:12px;color:#5a5a5a;letter-spacing:-0.15px;font-weight:bold;">2D-Kreis</div>
<div style="position:absolute;left:244px;top:175px;width:192px;height:22px;background:#e9e9e9"></div>
<div class="t" style="left:253.3px;top:180.14px;font-size:12px;color:#5a5a5a;letter-spacing:-0.15px;font-weight:bold;">3D-Kreis</div>
<div style="position:absolute;left:244px;top:253px;width:192px;height:22px;background:#e9e9e9"></div>
<div class="t" style="left:253.3px;top:258.04px;font-size:12px;color:#5a5a5a;letter-spacing:-0.15px;font-weight:bold;">Ring</div>
<div style="position:absolute;left:244px;top:119px;width:56px;height:56px;background:#c6c6c6"></div>
<svg style="left:244px;top:119px" width="60" height="56" viewBox="0 0 60 56"><circle cx="27.5" cy="27.2" r="17.3" fill="#fff" stroke="#6d6d6d" stroke-width="1"/><path d="M27.5 27.2V9.9A17.3 17.3 0 0 1 41 38.2z" fill="#d4d4d4" stroke="#6d6d6d" stroke-width="1"/></svg>
<svg style="left:300px;top:119px" width="60" height="56" viewBox="0 0 60 56"><path d="M26.8 18.6L43.1 21.2M26.8 36.3L43.4 34.8" stroke="#6d6d6d" stroke-width="1"/><path d="M18.2 27.4L26.8 18.6A12.35 12.35 0 1 0 26.8 36.3z" fill="#d4d4d4" stroke="#6d6d6d" stroke-width="1"/><path d="M18.2 27.4L26.8 18.6A12.35 12.35 0 0 1 26.8 36.3z" fill="#fff" stroke="#6d6d6d" stroke-width="1"/><circle cx="43.1" cy="27.7" r="6.9" fill="#d4d4d4" stroke="#6d6d6d" stroke-width="1"/><path d="M43.1 27.7V20.8A6.9 6.9 0 0 1 48 32.6z" fill="#fff" stroke="#6d6d6d" stroke-width="1"/></svg>
<svg style="left:356px;top:119px" width="60" height="56" viewBox="0 0 60 56"><path d="M27.6 18.2h21v18.3h-21" fill="#fff" stroke="#6d6d6d" stroke-width="1"/><rect x="38.3" y="24.5" width="10.3" height="5.9" fill="#d4d4d4" stroke="#6d6d6d" stroke-width="1"/><path d="M38.3 18.2v18.3" stroke="#6d6d6d" stroke-width="1"/><path d="M19.2 27.4L27.6 18.2A12.3 12.3 0 1 0 27.6 36.5z" fill="#d4d4d4" stroke="#6d6d6d" stroke-width="1"/></svg>
<svg style="left:244px;top:196px" width="60" height="57" viewBox="0 0 60 57"><path d="M8.2 25.7v6.3A19.4 10.5 0 0 0 47 32v-6.3" fill="#d4d4d4" stroke="#6d6d6d" stroke-width="1"/><path d="M36.2 35v5.8A19.4 10.5 0 0 0 47 32v-6.3A19.4 10.5 0 0 1 36.2 35z" fill="#fff" stroke="#6d6d6d" stroke-width="1"/><ellipse cx="27.6" cy="25.7" rx="19.4" ry="10.5" fill="#fff" stroke="#6d6d6d" stroke-width="1"/><path d="M27.4 26.3V15.2A19.4 10.5 0 0 0 36.2 35z" fill="#d4d4d4" stroke="#6d6d6d" stroke-width="1"/><path d="M27.4 26.3V15.2A19.4 10.5 0 1 0 36.2 35z" fill="#d4d4d4" stroke="#6d6d6d" stroke-width="1"/></svg>
<svg style="left:244px;top:275px" width="60" height="56" viewBox="0 0 60 56"><circle cx="27.6" cy="26.4" r="17.2" fill="#fff" stroke="#6d6d6d" stroke-width="1"/><path d="M27.6 9.2A17.2 17.2 0 0 1 39.8 38.6L34 32.8A9.1 9.1 0 0 0 27.6 17.3z" fill="#d4d4d4" stroke="#6d6d6d" stroke-width="1"/><circle cx="27.4" cy="26.3" r="9.1" fill="#fff" stroke="#6d6d6d" stroke-width="1"/></svg>
<div style="position:absolute;left:244px;top:331px;width:192px;height:1px;background:#e1e1e1"></div>
<svg style="left:249px;top:338px" width="14" height="14" viewBox="0 0 14 14"><circle cx="6.7" cy="6.6" r="5.4" fill="#fff" stroke="#6d6d6d" stroke-width="1.1"/><path d="M6.7 6.6V1.2A5.4 5.4 0 0 1 10.5 10.4z" fill="#aaa" stroke="#6d6d6d" stroke-width="1"/></svg>
<div class="t" style="left:275.2px;top:339.24px;font-size:12px;color:#444;letter-spacing:-0.15px;"><span style="position:relative">W<span style="position:absolute;left:0;right:0;top:11.4px;height:1px;background:#444"></span></span>eitere Kreisdiagramme...</div>
</body></html>
